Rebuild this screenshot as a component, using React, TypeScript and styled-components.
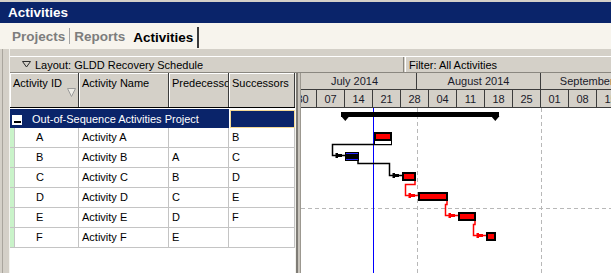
import React from "react";
import styled, { createGlobalStyle } from "styled-components";

const GlobalStyle = createGlobalStyle`
  html, body {
    margin: 0;
    padding: 0;
  }
  body {
    width: 611px;
    height: 273px;
    overflow: hidden;
    background: #d4d0c8;
    font-family: "Liberation Sans", Arial, sans-serif;
    font-size: 11px;
    color: #000;
  }
  * {
    box-sizing: border-box;
  }
`;

const NAVY = "#0a246a";

const Window = styled.div`
  width: 611px;
  height: 273px;
  display: flex;
  flex-direction: column;
  overflow: hidden;
  background: #d4d0c8;
`;

const TitleBar = styled.div`
  height: 21px;
  margin-top: 2px;
  flex: 0 0 auto;
  background: ${NAVY};
  color: #fff;
  font-weight: bold;
  font-size: 13.5px;
  padding-left: 8px;
  display: flex;
  align-items: center;
`;

const TabStrip = styled.div`
  height: 26px;
  flex: 0 0 auto;
  background: #f7f4ed;
  display: flex;
  align-items: stretch;
  padding-left: 8px;
`;

const Tab = styled.div<{ $active?: boolean }>`
  display: flex;
  align-items: center;
  padding: 0 4px;
  font-size: 13.5px;
  font-weight: bold;
  color: ${(p) => (p.$active ? "#000" : "#7d7d7d")};
  margin: ${(p) => (p.$active ? "4px 0 1px" : "0")};
  border-right: ${(p) => (p.$active ? "2px solid #3a3a3a" : "none")};
`;

const TabSep = styled.div`
  width: 1px;
  height: 16px;
  align-self: center;
  background: #a4a4a4;
`;

const Body = styled.div`
  flex: 1;
  min-height: 0;
  display: flex;
`;

const Gutter = styled.div`
  width: 10px;
  flex: 0 0 auto;
  background: linear-gradient(
    to right,
    #d4d0c8 0 2px,
    #a9a59d 2px 3px,
    #d4d0c8 3px 9px,
    #f4f3ef 9px 10px
  );
`;

const Panel = styled.div`
  flex: 1;
  min-width: 0;
  display: flex;
  flex-direction: column;
  padding-top: 7px;
`;

const LayoutBar = styled.div`
  height: 17px;
  flex: 0 0 auto;
  display: flex;
  border-top: 1px solid #fff;
  border-bottom: 1px solid #8a8780;
  font-size: 11px;
`;

const LayoutSection = styled.div`
  width: 394px;
  display: flex;
  align-items: center;
  gap: 4px;
  padding-left: 12px;
  border-right: 1px solid #8a8780;
`;

const FilterSection = styled.div`
  flex: 1;
  display: flex;
  align-items: center;
  margin-left: 1px;
  padding-left: 3px;
  border-left: 1px solid #fff;
`;

const Content = styled.div`
  flex: 1;
  min-height: 0;
  display: flex;
`;

const TablePane = styled.div`
  width: 285px;
  flex: 0 0 auto;
  display: flex;
  flex-direction: column;
  background: #fff;
`;

const COLS = "69px 90px 60px 66px";

const HeaderRow = styled.div`
  display: grid;
  grid-template-columns: ${COLS};
  height: 35px;
  flex: 0 0 auto;
  border-bottom: 1px solid #000;
  background: #d4d0c8;
`;

const HeadCell = styled.div`
  display: flex;
  flex-direction: column;
  padding: 4px 0 0 3px;
  border-right: 1px solid #3c3c3c;
  box-shadow: inset 1px 1px 0 #fff;
  white-space: nowrap;
  overflow: hidden;
  line-height: 13px;
`;

const SortIcon = styled.svg`
  align-self: flex-end;
  margin: -2px 2px 0 0;
`;

const ProjectRow = styled.div`
  display: grid;
  grid-template-columns: ${COLS};
  height: 20px;
  flex: 0 0 auto;
  border-top: 1px solid #fff;
`;

const ProjectName = styled.div`
  grid-column: 1 / span 3;
  background: ${NAVY};
  color: #fff;
  display: flex;
  align-items: center;
  gap: 10px;
  padding-left: 2px;
  white-space: nowrap;
`;

const MinusBox = styled.span`
  width: 10px;
  height: 10px;
  margin-top: 2px;
  background: #fff;
  display: flex;
  align-items: flex-end;
  justify-content: center;
  padding-bottom: 2px;

  &::after {
    content: "";
    width: 7px;
    height: 2px;
    background: #000;
  }
`;

const SelectedCell = styled.div`
  background: ${NAVY};
  border: 1px solid #f2d894;
  margin: 1px 0 0 1px;
`;

const DataRow = styled.div`
  display: grid;
  grid-template-columns: ${COLS};
  height: 20px;
  flex: 0 0 auto;
  border-bottom: 1px solid #c4c4c4;
`;

const Cell = styled.div<{ $id?: boolean }>`
  display: flex;
  align-items: center;
  padding-left: ${(p) => (p.$id ? "22px" : "3px")};
  padding-bottom: 1px;
  border-right: 1px solid #c4c4c4;
  border-left: ${(p) => (p.$id ? "4px solid #c9f3c9" : "none")};
  box-shadow: ${(p) => (p.$id ? "inset 1px 0 0 #c4c4c4" : "none")};
  white-space: nowrap;
  overflow: hidden;
`;

const Splitter = styled.div`
  width: 6px;
  flex: 0 0 auto;
  background: linear-gradient(
    to right,
    #f2f1ec 0 1px,
    #7f7c76 1px 3px,
    #c8c4bc 3px 5px,
    #9c9890 5px 6px
  );
`;

const GanttPane = styled.div`
  flex: 1;
  min-width: 0;
  display: flex;
  flex-direction: column;
  background: #fff;
  overflow: hidden;
`;

const ScaleRow = styled.div<{ $h: number; $shift: number }>`
  height: ${(p) => p.$h}px;
  flex: 0 0 auto;
  display: flex;
  background: #d4d0c8;
  border-bottom: 1px solid #3c3c3c;
  overflow: hidden;

  & > :first-child {
    margin-left: ${(p) => p.$shift}px;
  }
`;

const ScaleCell = styled.div<{ $w: number }>`
  flex: 0 0 ${(p) => p.$w}px;
  display: flex;
  align-items: center;
  justify-content: center;
  border-right: 1px solid #3c3c3c;
  color: #1a1a2a;
  white-space: nowrap;
`;

const Chart = styled.svg`
  display: block;
  flex: 0 0 auto;
`;

type Activity = { id: string; name: string; pred: string; succ: string };

const activities: Activity[] = [
  { id: "A", name: "Activity A", pred: "", succ: "B" },
  { id: "B", name: "Activity B", pred: "A", succ: "C" },
  { id: "C", name: "Activity C", pred: "B", succ: "D" },
  { id: "D", name: "Activity D", pred: "C", succ: "E" },
  { id: "E", name: "Activity E", pred: "D", succ: "F" },
  { id: "F", name: "Activity F", pred: "E", succ: "" },
];

const months = [
  { label: "July 2014", w: 124 },
  { label: "August 2014", w: 124 },
  { label: "September 2014", w: 120 },
];

const weeks = ["30", "07", "14", "21", "28", "04", "11", "18", "25", "01", "08", "15"];

// outer boxes in chart coordinates
const bars = [
  { x: 101, y: 64, w: 14 },
  { x: 117, y: 84, w: 30 },
  { x: 157, y: 104, w: 18 },
  { x: 185, y: 124, w: 10 },
];

const links = [
  { d: "M91,36.5 H31.5 V47.5 H44", tip: 41, y: 47.5, color: "#000" },
  { d: "M57,53 V55.5 H88.5 V67.5 H101", tip: 98, y: 67.5, color: "#000" },
  { d: "M114,73 V76.5 H104.5 V87.5 H117", tip: 114, y: 87.5, color: "#f00" },
  { d: "M146,93 V96.5 H144.5 V107.5 H157", tip: 154, y: 107.5, color: "#f00" },
  { d: "M174,113 V116.5 H172.5 V127.5 H185", tip: 182, y: 127.5, color: "#f00" },
];

const arrowPoints = (x: number, y: number) =>
  [
    [x - 6.5, y - 2.5],
    [x - 4, y - 2.5],
    [x - 4, y - 1.5],
    [x, y - 1.5],
    [x, y + 1.5],
    [x - 4, y + 1.5],
    [x - 4, y + 2.5],
    [x - 6.5, y + 2.5],
  ]
    .map((p) => p.join(","))
    .join(" ");

const GanttChart = () => (
  <Chart width={310} height={165} viewBox="0 0 310 165">
    <g stroke="#b8b8b8" strokeWidth={1} strokeDasharray="4 3">
      <line x1={116.5} y1={0} x2={116.5} y2={165} />
      <line x1={240.5} y1={0} x2={240.5} y2={165} />
      <line x1={0} y1={100.5} x2={310} y2={100.5} />
    </g>
    <line x1={72.5} y1={0} x2={72.5} y2={165} stroke="#0000ff" />

    {/* project summary */}
    <rect x={40} y={4} width={158} height={5} fill="#000" />
    <polygon points="40,8 48.5,8 44.3,13" fill="#000" />
    <polygon points="190,8 198.5,8 194.3,13" fill="#000" />

    {links.map((l, i) => (
      <g key={i}>
        <path d={l.d} fill="none" stroke={l.color} strokeWidth={1.5} />
        <polygon points={arrowPoints(l.tip, l.y)} fill={l.color} />
      </g>
    ))}

    {/* activity A with baseline */}
    <rect x={73.5} y={32.5} width={17} height={4} fill="#fff" stroke="#000" />
    <rect x={74} y={25} width={16} height={7} fill="#f00" stroke="#000" strokeWidth={2} />

    {/* activity B (complete) */}
    <rect x={44} y={44} width={14} height={9} fill="#000" />
    <line x1={45} y1={45.5} x2={57} y2={45.5} stroke="#2424ff" />
    <line x1={45} y1={51.5} x2={57} y2={51.5} stroke="#2424ff" />

    {bars.map((b, i) => (
      <rect
        key={i}
        x={b.x + 1}
        y={b.y + 1}
        width={b.w - 2}
        height={7}
        fill="#f00"
        stroke="#000"
        strokeWidth={2}
      />
    ))}
  </Chart>
);

export default function App() {
  return (
    <Window>
      <GlobalStyle />
      <TitleBar>Activities</TitleBar>
      <TabStrip>
        <Tab>Projects</Tab>
        <TabSep />
        <Tab>Reports</Tab>
        <Tab $active>Activities</Tab>
      </TabStrip>
      <Body>
        <Gutter />
        <Panel>
          <LayoutBar>
            <LayoutSection>
              <svg width={9} height={7} viewBox="0 0 9 7">
                <polygon points="0.5,0.5 8.5,0.5 4.5,6" fill="none" stroke="#2a2a2a" />
              </svg>
              <span>Layout: GLDD Recovery Schedule</span>
            </LayoutSection>
            <FilterSection>Filter: All Activities</FilterSection>
          </LayoutBar>
          <Content>
            <TablePane>
              <HeaderRow>
                <HeadCell>
                  Activity ID
                  <SortIcon width={9} height={9} viewBox="0 0 9 9">
                    <polygon points="0.5,0.5 8.5,0.5 4.5,8.5" fill="#eeece6" stroke="#9a9a9a" />
                  </SortIcon>
                </HeadCell>
                <HeadCell>Activity Name</HeadCell>
                <HeadCell>Predecessors</HeadCell>
                <HeadCell>Successors</HeadCell>
              </HeaderRow>
              <ProjectRow>
                <ProjectName>
                  <MinusBox />
                  Out-of-Sequence Activities Project
                </ProjectName>
                <SelectedCell />
              </ProjectRow>
              {activities.map((a) => (
                <DataRow key={a.id}>
                  <Cell $id>{a.id}</Cell>
                  <Cell>{a.name}</Cell>
                  <Cell>{a.pred}</Cell>
                  <Cell>{a.succ}</Cell>
                </DataRow>
              ))}
            </TablePane>
            <Splitter />
            <GanttPane>
              <ScaleRow $h={17} $shift={-8}>
                {months.map((m) => (
                  <ScaleCell key={m.label} $w={m.w}>
                    {m.label}
                  </ScaleCell>
                ))}
              </ScaleRow>
              <ScaleRow $h={18} $shift={-12}>
                {weeks.map((w, i) => (
                  <ScaleCell key={i} $w={28}>
                    {w}
                  </ScaleCell>
                ))}
              </ScaleRow>
              <GanttChart />
            </GanttPane>
          </Content>
        </Panel>
      </Body>
    </Window>
  );
}
